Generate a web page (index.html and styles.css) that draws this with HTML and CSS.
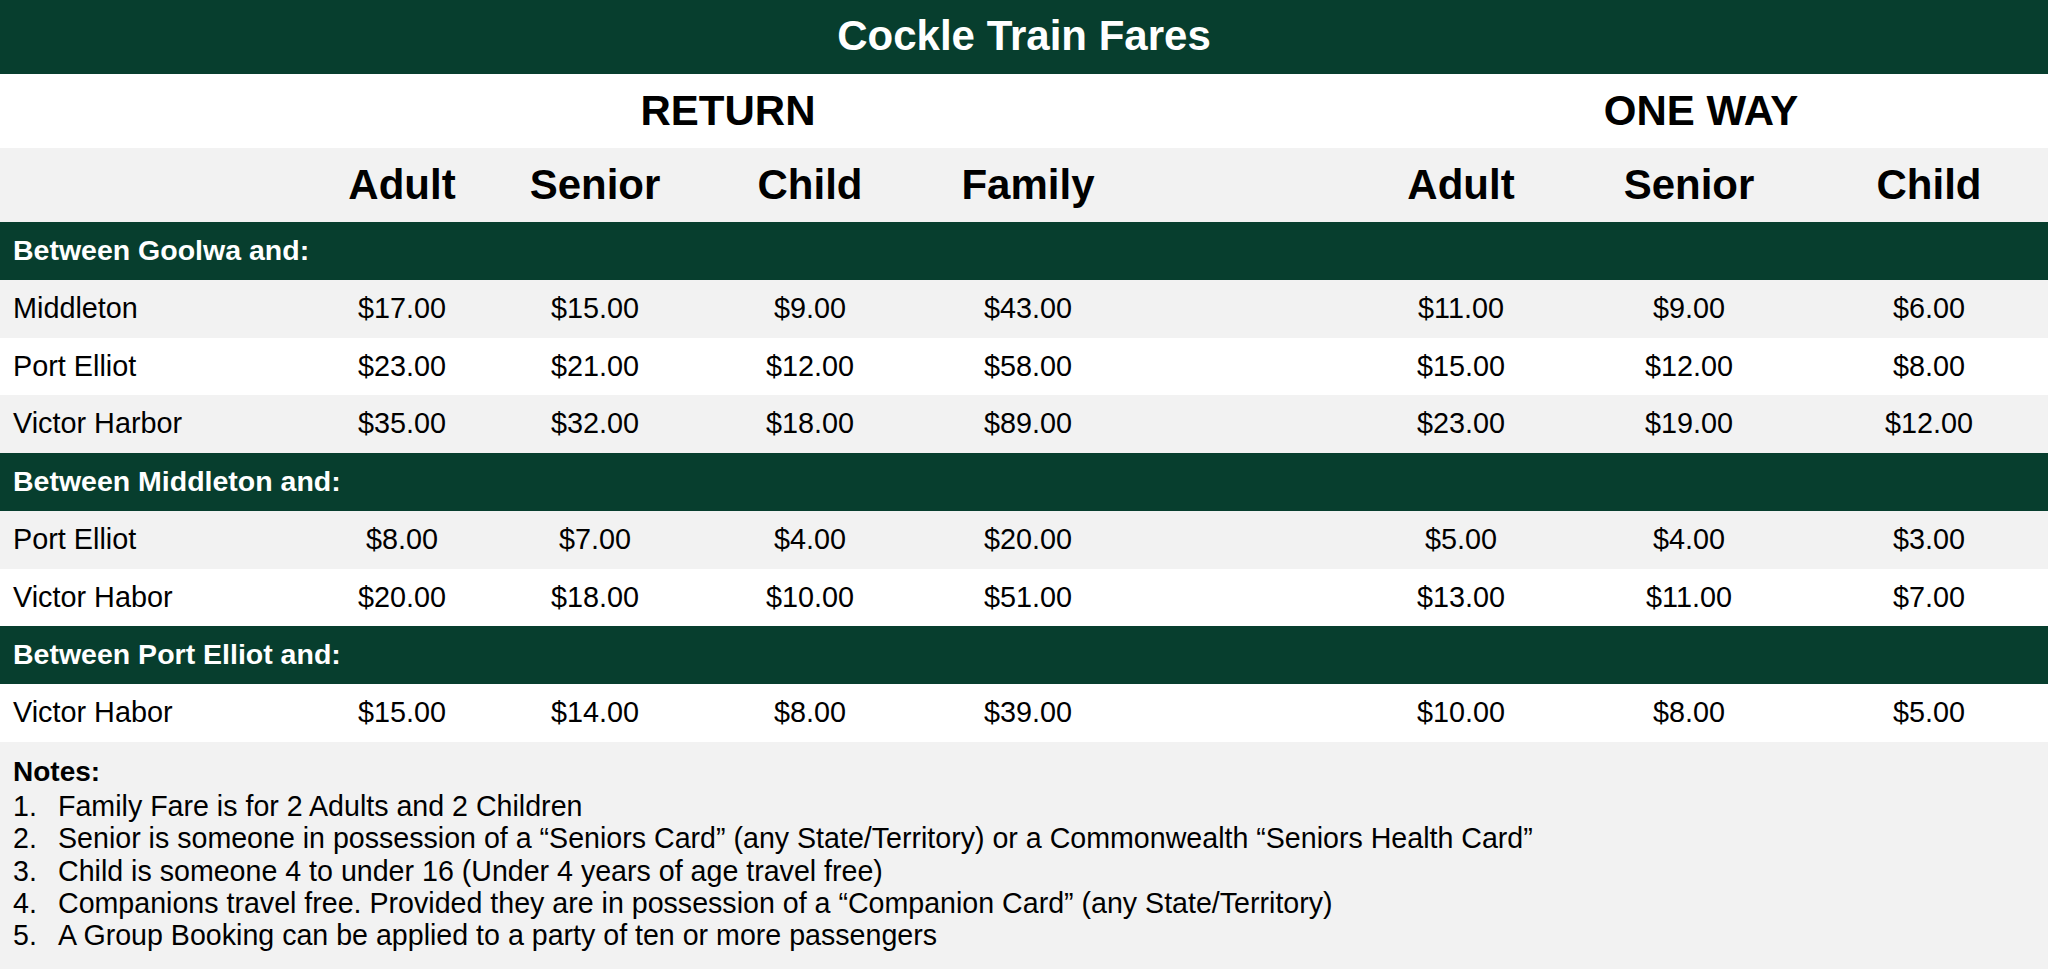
FILE: index.html
```html
<!DOCTYPE html>
<html lang="en">
<head>
<meta charset="utf-8">
<title>Cockle Train Fares</title>
<link rel="stylesheet" href="styles.css">
</head>
<body>
<div class="page">
  <h1 class="title">Cockle Train Fares</h1>

  <div class="grid group-head">
    <div class="span-return">RETURN</div>
    <div class="span-oneway">ONE WAY</div>
  </div>

  <div class="grid col-head">
    <div></div>
    <div>Adult</div>
    <div>Senior</div>
    <div>Child</div>
    <div>Family</div>
    <div></div>
    <div>Adult</div>
    <div>Senior</div>
    <div>Child</div>
  </div>

  <div class="section">Between Goolwa and:</div>
  <div class="grid row gray">
    <div class="label">Middleton</div><div>$17.00</div><div>$15.00</div><div>$9.00</div><div>$43.00</div><div></div><div>$11.00</div><div>$9.00</div><div>$6.00</div>
  </div>
  <div class="grid row white">
    <div class="label">Port Elliot</div><div>$23.00</div><div>$21.00</div><div>$12.00</div><div>$58.00</div><div></div><div>$15.00</div><div>$12.00</div><div>$8.00</div>
  </div>
  <div class="grid row gray">
    <div class="label">Victor Harbor</div><div>$35.00</div><div>$32.00</div><div>$18.00</div><div>$89.00</div><div></div><div>$23.00</div><div>$19.00</div><div>$12.00</div>
  </div>

  <div class="section">Between Middleton and:</div>
  <div class="grid row gray">
    <div class="label">Port Elliot</div><div>$8.00</div><div>$7.00</div><div>$4.00</div><div>$20.00</div><div></div><div>$5.00</div><div>$4.00</div><div>$3.00</div>
  </div>
  <div class="grid row white">
    <div class="label">Victor Habor</div><div>$20.00</div><div>$18.00</div><div>$10.00</div><div>$51.00</div><div></div><div>$13.00</div><div>$11.00</div><div>$7.00</div>
  </div>

  <div class="section">Between Port Elliot and:</div>
  <div class="grid row white">
    <div class="label">Victor Habor</div><div>$15.00</div><div>$14.00</div><div>$8.00</div><div>$39.00</div><div></div><div>$10.00</div><div>$8.00</div><div>$5.00</div>
  </div>

  <div class="notes">
    <div class="notes-title">Notes:</div>
    <ol class="notes-list">
      <li><span class="num">1.</span><span>Family Fare is for 2 Adults and 2 Children</span></li>
      <li><span class="num">2.</span><span>Senior is someone in possession of a “Seniors Card” (any State/Territory) or a Commonwealth “Seniors Health Card”</span></li>
      <li><span class="num">3.</span><span>Child is someone 4 to under 16 (Under 4 years of age travel free)</span></li>
      <li><span class="num">4.</span><span>Companions travel free. Provided they are in possession of a “Companion Card” (any State/Territory)</span></li>
      <li><span class="num">5.</span><span>A Group Booking can be applied to a party of ten or more passengers</span></li>
    </ol>
  </div>
</div>
</body>
</html>
```

FILE: styles.css
```css
html, body {
  margin: 0;
  padding: 0;
}

body {
  background: #f2f2f2;
  font-family: "Liberation Sans", Arial, Helvetica, sans-serif;
  color: #000;
  width: 2048px;
}

.page {
  display: flex;
  flex-direction: column;
}

.title {
  margin: 0;
  height: 74px;
  line-height: 72px;
  background: #073e2e;
  color: #fff;
  font-size: 42px;
  font-weight: bold;
  text-align: center;
}

.grid {
  display: grid;
  grid-template-columns: 317px 170px 216px 214px 222px 215px 214px 242px 238px;
}

.group-head {
  height: 74px;
  background: #fff;
  font-size: 42px;
  font-weight: bold;
  line-height: 74px;
  text-align: center;
}

.span-return {
  grid-column: 2 / 6;
}

.span-oneway {
  grid-column: 7 / 10;
}

.col-head {
  height: 74px;
  background: #f2f2f2;
  font-size: 42px;
  font-weight: bold;
  line-height: 74px;
  text-align: center;
}

.section {
  height: 57.78px;
  line-height: 57.78px;
  background: #073e2e;
  color: #fff;
  font-size: 28.5px;
  font-weight: bold;
  padding-left: 13px;
}

.row {
  height: 57.78px;
  line-height: 57.78px;
  font-size: 28.8px;
  text-align: center;
}

.row.gray {
  background: #f2f2f2;
}

.row.white {
  background: #fff;
}

.row .label {
  text-align: left;
  padding-left: 13px;
}

.notes {
  background: #f2f2f2;
  padding: 14px 13px 0;
  font-size: 28.6px;
  line-height: 32.3px;
}

.notes-title {
  font-weight: bold;
  font-size: 28px;
  margin-bottom: 2px;
}

.notes-list {
  list-style: none;
  margin: 0;
  padding: 0;
}

.notes-list li {
  display: flex;
}

.notes-list .num {
  width: 45px;
  flex: none;
}
```
